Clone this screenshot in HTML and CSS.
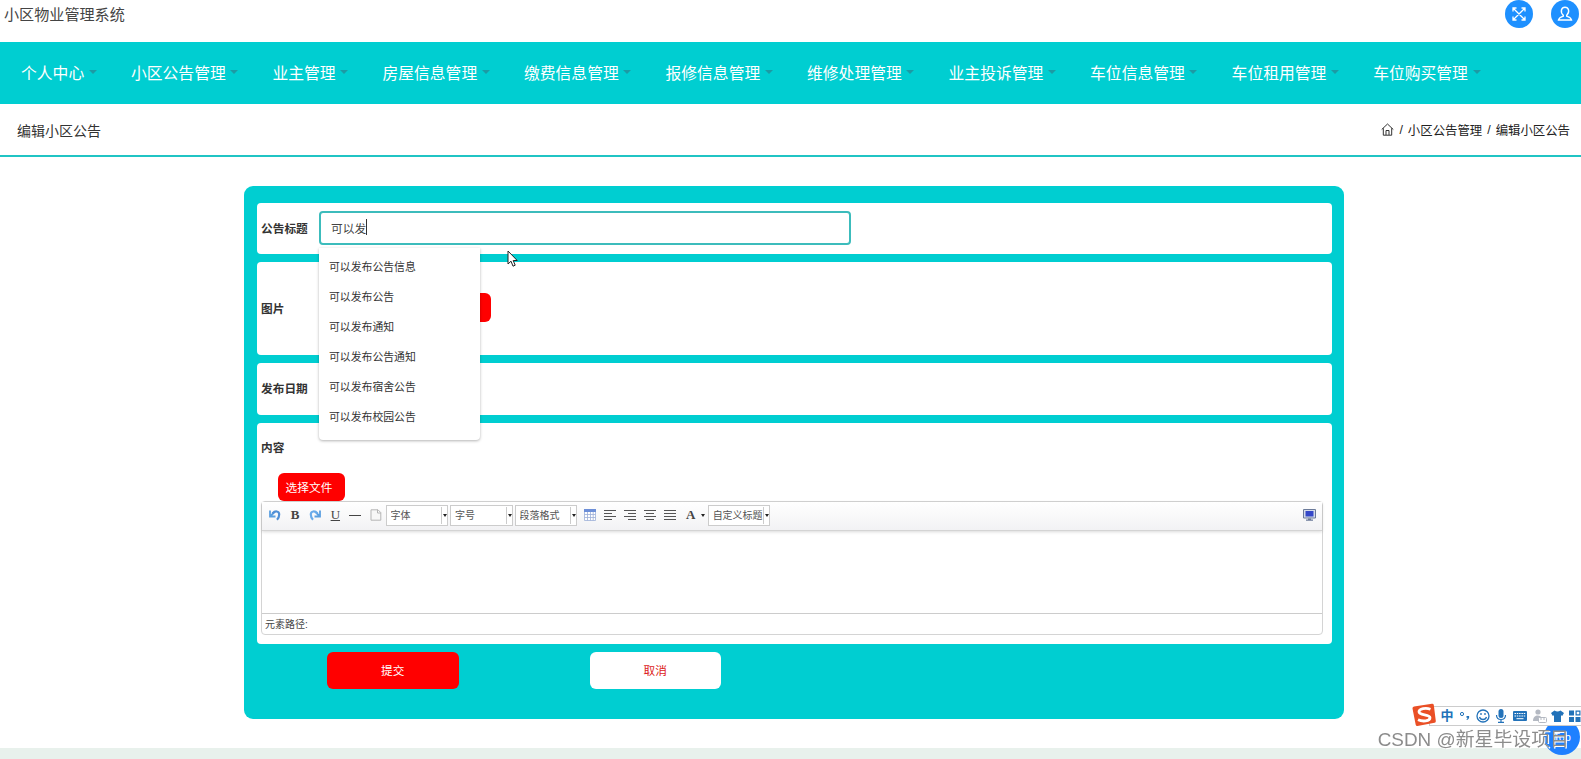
FILE: index.html
```
<!DOCTYPE html>
<html lang="zh-CN">
<head>
    <meta charset="UTF-8">
    <title>小区物业管理系统</title>
    <link rel="stylesheet" href="styles.css">
</head>
<body>
    <header class="header">
        <div class="logo">小区物业管理系统</div>
        <div class="header-btns">
            <a class="circle-btn">
                <svg width="14" height="14" viewBox="0 0 14 14" fill="none" stroke="#fff" stroke-width="1.3">
                    <path d="M1 4.5V1h3.5M9.5 1H13v3.5M13 9.500V13H9.500M4.500 13H1V9.500M1 1l12 12M13 1L1 13"/>
                </svg>
            </a>
            <a class="circle-btn">
                <svg width="16" height="16" viewBox="0 0 16 16" fill="none" stroke="#fff" stroke-width="1.400">
                    <path d="M6.300 9.200C4.500 7.500 4 5.500 4.500 3.700 5 2 6.300 1.200 8 1.200s3 .8 3.500 2.500c.5 1.800 0 3.800-1.800 5.500v1c2.300.8 4.300 1.300 4.800 3.800h-13c.5-2.500 2.500-3 4.800-3.800z"/>
                </svg>
            </a>
        </div>
    </header>

    <nav class="nav">
        <a class="nav-item">个人中心</a>
        <a class="nav-item">小区公告管理</a>
        <a class="nav-item">业主管理</a>
        <a class="nav-item">房屋信息管理</a>
        <a class="nav-item">缴费信息管理</a>
        <a class="nav-item">报修信息管理</a>
        <a class="nav-item">维修处理管理</a>
        <a class="nav-item">业主投诉管理</a>
        <a class="nav-item">车位信息管理</a>
        <a class="nav-item">车位租用管理</a>
        <a class="nav-item">车位购买管理</a>
    </nav>

    <div class="page-title">
        <h3>编辑小区公告</h3>
        <div class="breadcrumb">
            <svg width="13" height="13" viewBox="0 0 13 13" fill="none" stroke="#333" stroke-width="1">
                <path d="M.7 6.500L6.500 1l5.800 5.500M2.300 5.200v7h8.400v-7M5 12V7.500h3V12"/>
            </svg>
            <span>/</span><span>小区公告管理</span><span>/</span><span>编辑小区公告</span>
        </div>
    </div>

    <main class="panel">
        <div class="form-row row-title">
            <label>公告标题</label>
            <div class="input-wrap">
                <div class="text-input">可以发<i class="caret"></i></div>
                <ul class="suggest">
                    <li>可以发布公告信息</li>
                    <li>可以发布公告</li>
                    <li>可以发布通知</li>
                    <li>可以发布公告通知</li>
                    <li>可以发布宿舍公告</li>
                    <li>可以发布校园公告</li>
                </ul>
            </div>
        </div>
        <div class="form-row row-pic">
            <label>图片</label>
            <div class="upload-bar"></div>
        </div>
        <div class="form-row row-date">
            <label>发布日期</label>
        </div>
        <div class="form-row row-content">
            <label>内容</label>
            <button class="file-btn">选择文件</button>
            <div class="editor">
                <div class="toolbar">
                    <span class="tool">
                        <svg width="12" height="12" viewBox="0 0 12 12">
                            <path d="M1 1.500v6h5.500M1.500 7L5 3.500" fill="none" stroke="#5b9fe0" stroke-width="1.800"/>
                            <path d="M3.500 4.500C6 1.500 10.200 1.800 10.200 5.500c0 2.200-.8 3.800-2.200 5.200" fill="none" stroke="#4f8fd6" stroke-width="2.200"/>
                        </svg>
                    </span>
                    <span class="tool serif">B</span>
                    <span class="tool">
                        <svg width="12" height="12" viewBox="0 0 12 12">
                            <path d="M11 1.500v6H5.500M10.500 7L7 3.500" fill="none" stroke="#5b9fe0" stroke-width="1.800"/>
                            <path d="M8.500 4.500C6 1.500 1.800 1.800 1.800 5.500c0 2.200.8 3.800 2.200 5.200" fill="none" stroke="#6aabea" stroke-width="2.200"/>
                        </svg>
                    </span>
                    <span class="tool serif underline">U</span>
                    <span class="tool"><i class="hr-line"></i></span>
                    <span class="tool">
                        <svg width="12" height="12" viewBox="0 0 12 12" fill="#f7f7f7" stroke="#b5b5b5">
                            <path d="M1 .8h7l2.800 2.800v7.600H1zM7.500 .8V4h3.300"/>
                        </svg>
                    </span>
                    <span class="combo"><span>字体</span><i></i></span>
                    <span class="combo"><span>字号</span><i></i></span>
                    <span class="combo"><span>段落格式</span><i></i></span>
                    <span class="tool first-after">
                        <svg width="12" height="12" viewBox="0 0 12 12">
                            <path d="M.5 .5h11v11H.5z" fill="#fff"/>
                            <path d="M0 0h12v3H0z" fill="#6d8fd8"/>
                            <path d="M.5 3v8.500h11V3M.5 5.500h11M.5 8.500h11M3.500 3v8.500M6.500 3v8.500M9.200 3v8.500" fill="none" stroke="#9db0d8" stroke-width=".8"/>
                        </svg>
                    </span>
                    <span class="tool"><svg width="12" height="10" viewBox="0 0 12 10" stroke="#555"><path d="M0 .5h12M0 3.500h8M0 6.500h12M0 9.500h8"/></svg></span>
                    <span class="tool"><svg width="12" height="10" viewBox="0 0 12 10" stroke="#555"><path d="M0 .5h12M4 3.500h8M0 6.500h12M4 9.500h8"/></svg></span>
                    <span class="tool"><svg width="12" height="10" viewBox="0 0 12 10" stroke="#555"><path d="M0 .5h12M2 3.500h8M0 6.500h12M2 9.500h8"/></svg></span>
                    <span class="tool"><svg width="12" height="10" viewBox="0 0 12 10" stroke="#555"><path d="M0 .5h12M0 3.500h12M0 6.500h12M0 9.500h12"/></svg></span>
                    <span class="tool serif">A</span>
                    <i class="arrow"></i>
                    <span class="combo"><span>自定义标题</span><i></i></span>
                    <span class="tool fullscreen">
                        <svg width="13" height="12" viewBox="0 0 13 12">
                            <path d="M.5.5h12v8.500H.5z" fill="#d5dcea" stroke="#6b7a99"/>
                            <path d="M2.500 2h8v5.500h-8z" fill="#3548c8"/>
                            <path d="M5 9.500h3v1h2v1.300H3v-1.300h2z" fill="#6b7a99"/>
                        </svg>
                    </span>
                </div>
                <div class="edit-area"></div>
                <div class="path-bar">元素路径:</div>
            </div>
        </div>
        <div class="form-btns">
            <button class="submit">提交</button>
            <button class="cancel">取消</button>
        </div>
    </main>

    <footer class="footer"></footer>

    <svg class="cursor" width="11" height="18" viewBox="0 0 11 18">
        <path d="M1 1v13l3-2.800 2 5 2.200-1-2-4.700h4z" fill="#fff" stroke="#222" stroke-width="1"/>
    </svg>

    <a class="top-btn">Top</a>

    <!-- 输入法工具条 -->
    <div class="ime">
        <svg class="ime-logo" width="26" height="24" viewBox="0 0 26 24">
            <path d="M3 3.500L21 .8q1.500-.2 1.800 1.200l2 16q.2 1.500-1.200 1.800L6.500 23q-1.500.2-1.800-1.200L1.500 5.500Q1.300 3.800 3 3.500z" fill="#ea5026"/>
            <path d="M19.500 6.200C15 4.500 8 5.500 8 8.800c0 4 11 2.200 11 6 0 3.500-7.500 4-12 2" fill="none" stroke="#fff" stroke-width="2.800"/>
        </svg>
        <div class="ime-bar">
            <span class="ime-zh">中</span>
            <svg width="18" height="14" viewBox="0 0 18 14"><circle cx="6" cy="5" r="1.600" fill="none" stroke="#2272b9"/><path d="M10.500 7h2.600c.3 2.200-.4 3.400-2.300 4l-.3-.8c.8-.3 1-.8 1-1.400h-1z" fill="#2272b9"/></svg>
            <svg width="18" height="14" viewBox="0 0 18 14" fill="none" stroke="#2272b9" stroke-width="1.300"><circle cx="9" cy="7" r="6"/><path d="M5.500 8c1 3.300 6 3.300 7 0"/><path d="M7 4v2M11 4v2"/></svg>
            <svg width="18" height="14" viewBox="0 0 18 14"><rect x="6.500" y="0" width="5" height="9" rx="2.500" fill="#2272b9"/><path d="M4.500 6c0 6 9 6 9 0M9 10.500V13M6 13.400h6" fill="none" stroke="#2272b9" stroke-width="1.200"/></svg>
            <svg width="20" height="14" viewBox="0 0 20 14"><rect x="3" y="2" width="14" height="10" rx="1" fill="#2272b9"/><path d="M4.500 4.500h11M4.500 7h11" stroke="#fff" stroke-width="1.200" stroke-dasharray="1.500 .8"/><path d="M6.500 9.700h7" stroke="#fff"/></svg>
            <svg width="19" height="14" viewBox="0 0 19 14"><circle cx="8" cy="3" r="2.600" fill="#b4b9c2"/><path d="M3 12c0-7 9-7 9-1v1z" fill="#b4b9c2"/><rect x="8.500" y="8.500" width="8" height="5" rx="1" fill="#fff" stroke="#b4b9c2"/><path d="M11 9v2M14 9v2" stroke="#b4b9c2"/></svg>
            <svg width="17" height="14" viewBox="0 0 17 14"><path d="M5.500 1.500q3 2 6 0L15 4l-1.800 3-1.200-.7V13H5V6.300L3.800 7 2 4z" fill="#2272b9"/></svg>
            <svg width="18" height="14" viewBox="0 0 18 14"><path d="M3 1.500h5v5H3zM3 8h5v5H3zM9.500 8h5v5h-5z" fill="#2272b9"/><path d="M10.100 2.100h3.800v3.800h-3.800z" fill="none" stroke="#2272b9" stroke-width="1.200"/></svg>
        </div>
    </div>
    <div class="watermark">CSDN @新星毕设项目</div>
</body>
</html>
```
FILE: styles.css
```
* {
    box-sizing: border-box;
}
html, body {
    height: 100%;
}
body {
    margin: 0;
    overflow: hidden;
    display: flex;
    flex-direction: column;
    background: #fff;
    color: #333;
    font-family: "Liberation Sans", "Noto Sans CJK SC", sans-serif;
    font-size: 11.7px;
}
button {
    border: none;
    padding: 0 0 2px;
    font-family: inherit;
    font-size: 11.7px;
}

/* 顶部 */
.header {
    height: 42px;
    flex: none;
    display: flex;
    justify-content: space-between;
    padding: 0 2px 0 4px;
}
.logo {
    font-size: 15.1px;
    line-height: 30px;
    color: #444;
}
.header-btns {
    display: flex;
    gap: 18px;
}
.circle-btn {
    width: 28px;
    height: 28px;
    border-radius: 50%;
    background: #1e90ff;
    display: flex;
    align-items: center;
    justify-content: center;
}
.nav {
    height: 62px;
    flex: none;
    padding: 0 0 2px 4px;
    display: flex;
    align-items: center;
    background: #00ced1;
}
.nav-item {
    display: flex;
    align-items: center;
    padding: 0 17.150px 0 17px;
    font-size: 15.8px;
    color: #fff;
    white-space: nowrap;
}
.nav-item::after {
    content: "";
    margin-left: 4.600px;
    border: 4px solid transparent;
    border-top-color: #1c9aa4;
    border-bottom: none;
}

/* 标题和面包屑 */
.page-title {
    height: 53px;
    flex: none;
    display: flex;
    align-items: center;
    justify-content: space-between;
    padding: 0 11px 0 17px;
    border-bottom: 2px solid #20c4c4;
}
.page-title h3 {
    margin: 0;
    font-size: 14px;
    font-weight: normal;
}
.breadcrumb {
    display: flex;
    align-items: center;
    gap: 5px;
    font-size: 12.4px;
    color: #222;
}

/* 表单 */
.panel {
    width: 1100px;
    height: 533px;
    flex: none;
    margin: 29px 0 0 244px;
    padding: 17px 12px 0 13px;
    border-radius: 9px;
    background: #00ced1;
    display: flex;
    flex-direction: column;
    gap: 8px;
}
.form-row {
    display: flex;
    align-items: center;
    padding: 0 4px 2px;
    border-radius: 4px;
    background: #fff;
}
.form-row label {
    width: 58px;
    font-weight: bold;
    color: #333;
}
.row-title {
    height: 51px;
}
.row-pic {
    height: 93px;
}
.row-date {
    height: 52px;
    padding-bottom: 3px;
}
.input-wrap {
    position: relative;
    width: 532px;
}
.text-input {
    height: 34px;
    padding: 0 0 1px 10px;
    display: flex;
    align-items: center;
    border: 2px solid #3cbcbc;
    border-radius: 4px;
    color: #444;
}
.caret {
    width: 1px;
    height: 16px;
    background: #333;
}
.suggest {
    position: absolute;
    top: 37px;
    left: 0;
    z-index: 2;
    width: 161px;
    height: 192px;
    margin: 0;
    padding: 4px 10px;
    list-style: none;
    background: #fff;
    border-radius: 0 0 4px 4px;
    box-shadow: 0 1px 3px rgba(0,0,0,0.3);
    font-size: 10.850px;
    line-height: 30.100px;
}
.upload-bar {
    width: 172px;
    height: 29px;
    border-radius: 6px;
    background: #f00;
}
.row-content {
    height: 221px;
    flex-direction: column;
    align-items: flex-start;
    padding: 0 8px 0 4px;
}
.row-content label {
    line-height: 50px;
}
.file-btn {
    width: 67px;
    height: 28px;
    flex: none;
    margin-left: 17px;
    border-radius: 6px;
    background: #f00;
    color: #fff;
    padding-right: 5px;
}
.editor {
    width: 1062px;
    border: 1px solid #d4d4d4;
    border-radius: 4px;
}
.toolbar {
    height: 29px;
    display: flex;
    align-items: center;
    padding: 0 2px 2px 3px;
    border-bottom: 1px solid #d4d4d4;
    background: linear-gradient(#fff, #f2f2f4);
    box-shadow: 0 1px 3px rgba(0,0,0,0.15);
}
.tool {
    width: 20.100px;
    flex: none;
    display: flex;
    align-items: center;
    justify-content: center;
}
.tool.serif {
    font-family: "Liberation Serif", serif;
    font-size: 13px;
    font-weight: bold;
    color: #444;
}
.tool.underline {
    text-decoration: underline;
    font-weight: normal;
}
.hr-line {
    width: 12px;
    height: 1px;
    background: #444;
}
.combo {
    width: 62.500px;
    height: 21px;
    flex: none;
    margin-right: 2px;
    display: flex;
    align-items: center;
    border: 1px solid #ccc;
    background: #fff;
    font-size: 10px;
    color: #555;
}
.combo span {
    flex: 1;
    height: 17px;
    line-height: 17px;
    margin-left: 4px;
    overflow: hidden;
    white-space: nowrap;
    border-right: 1px solid #ccc;
}
.combo span + i, .arrow {
    margin: 0 0 0 1px;
    border: 2.500px solid transparent;
    border-top: 3px solid #222;
    border-bottom: none;
}
.first-after {
    margin-left: 1px;
}
.arrow {
    margin: 0 3px 0 0;
}
.fullscreen {
    margin-left: auto;
}
.edit-area {
    height: 82px;
}
.path-bar {
    height: 21px;
    padding-left: 3px;
    border-top: 1px solid #ccc;
    font-size: 10px;
    line-height: 21px;
    color: #444;
}
.form-btns {
    display: flex;
    gap: 131px;
    padding-left: 70px;
}
.form-btns button {
    width: 131.500px;
    height: 37px;
    border-radius: 6px;
}
.form-btns .submit {
    background: #f00;
    color: #fff;
}
.form-btns .cancel {
    background: #fff;
    color: #dc2020;
}
.footer {
    height: 11px;
    flex: none;
    margin-top: auto;
    background: #e8f1ec;
}

/* 浮层 */
.cursor {
    position: absolute;
    left: 507px;
    top: 250px;
}
.top-btn {
    position: fixed;
    right: 1px;
    bottom: 4px;
    width: 36px;
    height: 36px;
    border-radius: 50%;
    background: #1e80ff;
    color: #fff;
    font-size: 11px;
    line-height: 36px;
    text-align: center;
}
.ime {
    position: fixed;
    right: 0;
    bottom: 32px;
    display: flex;
    align-items: center;
}
.ime-logo {
    z-index: 1;
    margin-right: -8px;
}
.ime-bar {
    width: 152px;
    height: 20px;
    margin-top: 1px;
    display: flex;
    align-items: center;
    overflow: hidden;
    padding-left: 8px;
    border: 1px solid #ccc;
    border-right: none;
    background: #fff;
}
.ime-bar svg {
    flex: none;
}
.ime-zh {
    width: 18px;
    flex: none;
    padding-bottom: 2px;
    text-align: center;
    font-size: 13px;
    font-weight: bold;
    color: #2272b9;
}
.watermark {
    position: fixed;
    right: 12px;
    bottom: 5px;
    font-size: 18.9px;
    line-height: 28px;
    white-space: nowrap;
    color: #8c8c8c;
    text-shadow: 1px 1px 0 #fff;
}
```
